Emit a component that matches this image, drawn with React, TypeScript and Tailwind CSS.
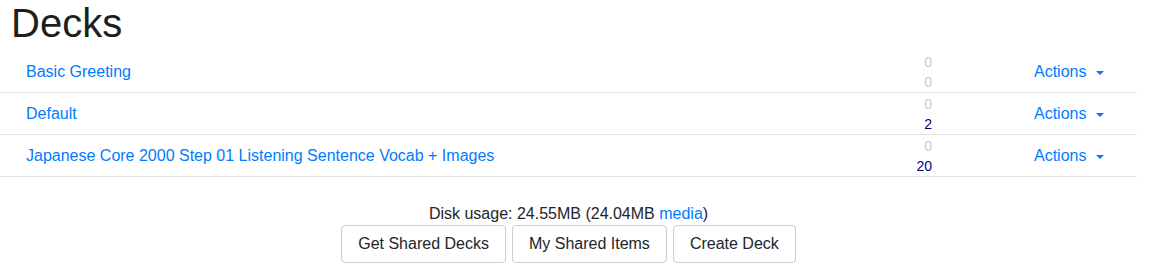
import React from "react";

type Deck = { name: string; newCount: number; dueCount: number };

const decks: Deck[] = [
  { name: "Basic Greeting", newCount: 0, dueCount: 0 },
  { name: "Default", newCount: 0, dueCount: 2 },
  { name: "Japanese Core 2000 Step 01 Listening Sentence Vocab + Images", newCount: 0, dueCount: 20 },
];

function Count({ value }: { value: number }) {
  return (
    <div className={value === 0 ? "text-[#cccccc]" : "text-[#000080]"}>{value}</div>
  );
}

function DeckRow({ deck }: { deck: Deck }) {
  return (
    <div className="grid h-[42px] grid-cols-[1fr_auto_205px] items-center border-b border-[#e3e3e3]">
      <a href="#" className="pl-[26px] text-[16px] leading-6 text-[#007bff]">
        {deck.name}
      </a>
      <div className="text-right text-[14px] leading-5">
        <Count value={deck.newCount} />
        <Count value={deck.dueCount} />
      </div>
      <div className="flex items-center pl-[102px] text-[16px] leading-6 text-[#007bff]">
        <span>Actions</span>
        <span className="ml-[10px] mt-[2px] h-0 w-0 border-x-[4px] border-t-[4px] border-x-transparent border-t-[#007bff]" />
      </div>
    </div>
  );
}

function Button({ children }: { children: React.ReactNode }) {
  return (
    <button className="h-[38px] rounded-[4px] border border-[#cccccc] bg-white px-[16px] text-[16px] leading-6 text-[#212529]">
      {children}
    </button>
  );
}

export default function App() {
  return (
    <div
      className="w-[1149px] bg-white text-[#212529]"
      style={{ fontFamily: '"Liberation Sans", Arial, sans-serif' }}
    >
      <div className="w-[1137px]">
        <h1 className="mb-[5px] pl-[11px] text-[40px] font-medium leading-[46px] text-[#1e1e1e]">Decks</h1>
        <div>
          {decks.map((d) => (
            <DeckRow key={d.name} deck={d} />
          ))}
        </div>
        <div className="mt-[25px] flex flex-col items-center">
          <div className="text-[16px] leading-[23px]">
            Disk usage: 24.55MB (24.04MB{" "}
            <a href="#" className="text-[#007bff]">
              media
            </a>
            )
          </div>
          <div className="flex gap-[6px]">
            <Button>Get Shared Decks</Button>
            <Button>My Shared Items</Button>
            <Button>Create Deck</Button>
          </div>
        </div>
      </div>
    </div>
  );
}
